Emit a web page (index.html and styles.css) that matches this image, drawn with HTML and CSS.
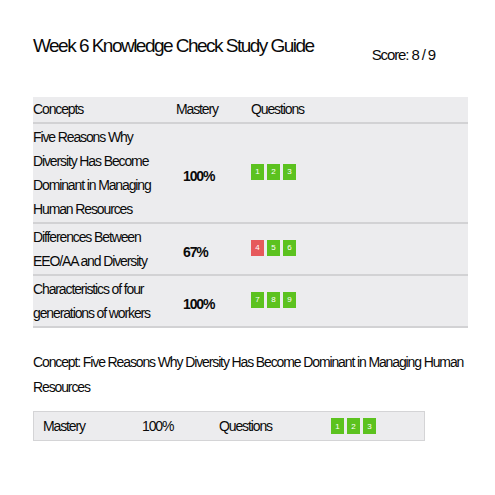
FILE: index.html
```html
<!DOCTYPE html>
<html>
<head>
<meta charset="utf-8">
<link rel="stylesheet" href="styles.css">
</head>
<body>
<div class="page">
  <div class="top">
    <h1 class="title">Week 6 Knowledge Check Study Guide</h1>
    <div class="score">Score: 8 / 9</div>
  </div>
  <table class="summary">
    <colgroup><col class="w-concept"><col class="w-mastery"><col></colgroup>
    <thead>
      <tr><th>Concepts</th><th>Mastery</th><th>Questions</th></tr>
    </thead>
    <tbody>
      <tr>
        <td>Five Reasons Why Diversity Has Become Dominant in Managing Human Resources</td>
        <td class="pct">100%</td>
        <td><div class="badges"><span class="b ok">1</span><span class="b ok">2</span><span class="b ok">3</span></div></td>
      </tr>
      <tr>
        <td>Differences Between EEO/AA and Diversity</td>
        <td class="pct">67%</td>
        <td><div class="badges"><span class="b bad">4</span><span class="b ok">5</span><span class="b ok">6</span></div></td>
      </tr>
      <tr>
        <td>Characteristics of four generations of workers</td>
        <td class="pct">100%</td>
        <td><div class="badges"><span class="b ok">7</span><span class="b ok">8</span><span class="b ok">9</span></div></td>
      </tr>
    </tbody>
  </table>
  <h2 class="concept-title">Concept: Five Reasons Why Diversity Has Become Dominant in Managing Human Resources</h2>
  <div class="detail">
    <span class="d-label">Mastery</span>
    <span class="d-val">100%</span>
    <span class="d-label">Questions</span>
    <div class="badges"><span class="b ok">1</span><span class="b ok">2</span><span class="b ok">3</span></div>
  </div>
</div>
</body>
</html>
```
FILE: styles.css
```css
html, body { margin: 0; padding: 0; background: #fff; }
body {
  font-family: "Liberation Sans", Arial, sans-serif;
  color: #0a0a0a;
  letter-spacing: -0.07em;
}
.page { padding: 34px 7px 0 33px; }
.top {
  display: flex;
  justify-content: space-between;
  align-items: flex-start;
  padding-right: 53px;
}
.title {
  margin: 0;
  font-size: 19px;
  font-weight: normal;
  line-height: 24px;
  letter-spacing: -0.08em;
}
.score {
  font-size: 15px;
  line-height: 18px;
  margin-top: 12px;
}
.summary {
  margin-top: 33px;
  width: 435px;
  table-layout: fixed;
  border-collapse: collapse;
  background: #ececee;
  font-size: 14px;
}
.w-concept { width: 143px; }
.w-mastery { width: 75px; }
.summary th, .summary td {
  padding: 1px 0;
  text-align: left;
  vertical-align: middle;
  line-height: 24px;
  font-weight: normal;
}
.summary th { padding: 0 0 1px; border-bottom: 2px solid #d2d2d4; }
.summary td { border-bottom: 2px solid #d2d2d4; }
.summary td.pct { font-weight: bold; padding: 6px 0 0 7px; }
.summary .badges { margin-bottom: 3px; }
.badges { display: flex; gap: 3px; }
.b {
  display: flex;
  align-items: center;
  justify-content: center;
  width: 13px;
  height: 16px;
  color: #fff;
  font-size: 8px;
  letter-spacing: 0;
}
.ok { background: #5cc21f; }
.bad { background: #e6595b; }
.concept-title {
  margin: 22px 0 0;
  font-size: 14px;
  font-weight: normal;
  line-height: 25px;
}
.detail {
  margin-top: 11px;
  width: 381px;
  height: 28px;
  border: 1px solid #d4d4d6;
  background: #ececee;
  display: grid;
  grid-template-columns: 99px 77px 112px auto;
  align-items: center;
  padding-left: 9px;
  font-size: 14px;
}
```
